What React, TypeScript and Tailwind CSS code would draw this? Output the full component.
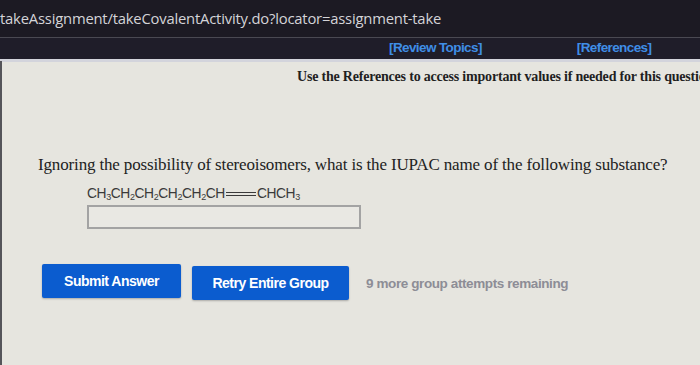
import React from "react";

export default function App() {
  return (
    <div className="w-[700px] h-[365px] overflow-hidden bg-[#e6e5df] relative">
      {/* URL bar */}
      <div className="h-[37px] bg-[#1c1a23] flex items-center">
        <span className="text-[14.8px] text-[#d4d4d8] whitespace-nowrap tracking-[-0.2px]" style={{ fontFamily: '"Open Sans", sans-serif' }}>
          takeAssignment/takeCovalentActivity.do?locator=assignment-take
        </span>
      </div>
      <div className="h-[1px] bg-[#4a4952]" />
      {/* links band */}
      <div className="h-[21px] bg-[#1f1d29] flex items-center pl-[389px] text-[13.5px] font-bold text-[#3f8ee6] whitespace-nowrap tracking-[-0.6px]" style={{ fontFamily: '"Liberation Sans", Arial, sans-serif' }}>
        <span>[Review Topics]</span>
        <span className="ml-[95px]">[References]</span>
      </div>
      <div className="h-[3px] bg-[#d3d4dc]" />
      {/* notice */}
      <div className="h-[28px] flex items-center pl-[297px] whitespace-nowrap overflow-hidden">
        <span className="text-[14px] font-bold text-[#1f1f1f] tracking-[-0.2px]" style={{ fontFamily: '"Liberation Serif", "Times New Roman", serif' }}>
          Use the References to access important values if needed for this question.
        </span>
      </div>
      {/* question */}
      <div className="pl-[38px] mt-[62px] h-[24px] leading-[24px] whitespace-nowrap">
        <span className="text-[17px] text-[#222] tracking-[-0.15px]" style={{ fontFamily: '"Liberation Serif", "Times New Roman", serif' }}>
          Ignoring the possibility of stereoisomers, what is the IUPAC name of the following substance?
        </span>
      </div>
      {/* formula */}
      <div className="pl-[87px] mt-[9px] h-[18px] flex items-center text-[13.8px] text-[#3a3a3a] whitespace-nowrap tracking-[-0.4px]" style={{ fontFamily: '"Liberation Sans", Arial, sans-serif' }}>
        <span>CH<sub className="text-[9px]">3</sub>CH<sub className="text-[9px]">2</sub>CH<sub className="text-[9px]">2</sub>CH<sub className="text-[9px]">2</sub>CH<sub className="text-[9px]">2</sub>CH</span>
        <span className="flex flex-col gap-[2px] w-[30px] mx-[1px]">
          <span className="h-[1px] bg-[#3a3a3a]" />
          <span className="h-[1px] bg-[#3a3a3a]" />
        </span>
        <span>CHCH<sub className="text-[9px]">3</sub></span>
      </div>
      {/* input */}
      <div className="pl-[87px] mt-[2px]">
        <div className="w-[274px] h-[24px] border-2 border-[#a3a3a3] bg-[#e9e8e3]" />
      </div>
      {/* buttons */}
      <div className="pl-[42px] mt-[35px] flex items-start whitespace-nowrap" style={{ fontFamily: '"Liberation Sans", Arial, sans-serif' }}>
        <div className="w-[139px] h-[34px] bg-[#0b5ccf] rounded-[2px] flex items-center justify-center text-white font-bold text-[14px] tracking-[-0.5px] shadow-[0_1px_2px_rgba(0,0,0,0.25)]">
          Submit Answer
        </div>
        <div className="ml-[11px] mt-[2px] w-[157px] h-[34px] bg-[#0b5ccf] rounded-[2px] flex items-center justify-center text-white font-bold text-[14px] tracking-[-0.5px] shadow-[0_1px_2px_rgba(0,0,0,0.25)]">
          Retry Entire Group
        </div>
        <span className="ml-[17px] mt-[10px] text-[13.5px] font-bold text-[#8d8d96] tracking-[-0.4px]">
          9 more group attempts remaining
        </span>
      </div>
      <div className="absolute left-0 top-[61px] bottom-0 w-[2px] bg-[#55555a]" />
    </div>
  );
}
